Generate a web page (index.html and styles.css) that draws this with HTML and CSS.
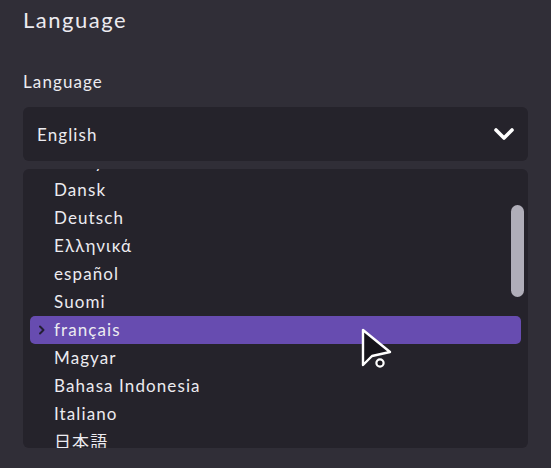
FILE: index.html
```html
<!DOCTYPE html>
<html lang="en">
<head>
<meta charset="utf-8">
<title>Language</title>
<link rel="stylesheet" href="styles.css">
</head>
<body>
<div class="page">
  <h1 class="title">Language</h1>
  <div class="label">Language</div>
  <div class="select">
    <span class="select-value">English</span>
    <svg class="select-chevron" width="22" height="16" viewBox="0 0 22 16"><path d="M3 4 L11 12 L19 4" fill="none" stroke="#fff" stroke-width="3.6" stroke-linecap="round" stroke-linejoin="round"/></svg>
  </div>
  <div class="list">
    <div class="list-inner">
      <div class="item">Česky</div>
      <div class="item">Dansk</div>
      <div class="item">Deutsch</div>
      <div class="item">Ελληνικά</div>
      <div class="item">español</div>
      <div class="item">Suomi</div>
      <div class="item active"><svg class="item-chevron" width="8" height="10" viewBox="0 0 8 10"><path d="M2 1.5 L5.5 5 L2 8.5" fill="none" stroke="#231f33" stroke-width="2" stroke-linecap="round" stroke-linejoin="round"/></svg>français</div>
      <div class="item">Magyar</div>
      <div class="item">Bahasa Indonesia</div>
      <div class="item">Italiano</div>
      <div class="item">日本語</div>
    </div>
    <div class="scrollbar"></div>
  </div>
</div>
<svg class="cursor" width="36" height="44" viewBox="0 0 36 44">
  <path d="M2 2 L2 37 L11 28 L29 24 Z" fill="#16141b" stroke="#fff" stroke-width="2.4" stroke-linejoin="round"/>
  <circle cx="19" cy="35" r="3.6" fill="#16141b" stroke="#fff" stroke-width="2.2"/>
</svg>
</body>
</html>
```
FILE: styles.css
```css
html, body {
  margin: 0;
  padding: 0;
  background: #302e37;
  width: 551px;
  height: 468px;
  overflow: hidden;
}
body {
  font-family: "Lato", "Noto Sans CJK JP", sans-serif;
  color: #ecebf0;
  position: relative;
}
.page {
  padding: 0 23px;
}
.title {
  margin: 0;
  padding-top: 6px;
  font-size: 22px;
  font-weight: 400;
  line-height: 28px;
  letter-spacing: 1.5px;
}
.label {
  margin-top: 37px;
  font-size: 17px;
  line-height: 22px;
  letter-spacing: 1.1px;
}
.select {
  margin-top: 14px;
  height: 54px;
  background: #25232b;
  border-radius: 6px;
  display: flex;
  align-items: center;
  justify-content: space-between;
  padding: 0 13px 0 14px;
}
.select-value {
  font-size: 17px;
  letter-spacing: 1.1px;
}
.select-chevron {
  display: block;
}
.list {
  position: relative;
  margin-top: 8px;
  height: 279px;
  background: #25232b;
  border-radius: 6px;
  overflow: hidden;
}
.list-inner {
  margin-top: -21px;
  padding: 0 7px;
}
.item {
  height: 28px;
  line-height: 28px;
  padding-left: 24px;
  font-size: 17px;
  letter-spacing: 1.1px;
  position: relative;
  border-radius: 5px;
}
.item.active {
  background: #674cb0;
}
.item-chevron {
  position: absolute;
  left: 8px;
  top: 9px;
}
.scrollbar {
  position: absolute;
  right: 4px;
  top: 36px;
  width: 13px;
  height: 92px;
  border-radius: 7px;
  background: #b0aeb9;
}
.cursor {
  position: absolute;
  left: 361px;
  top: 328px;
}
```
